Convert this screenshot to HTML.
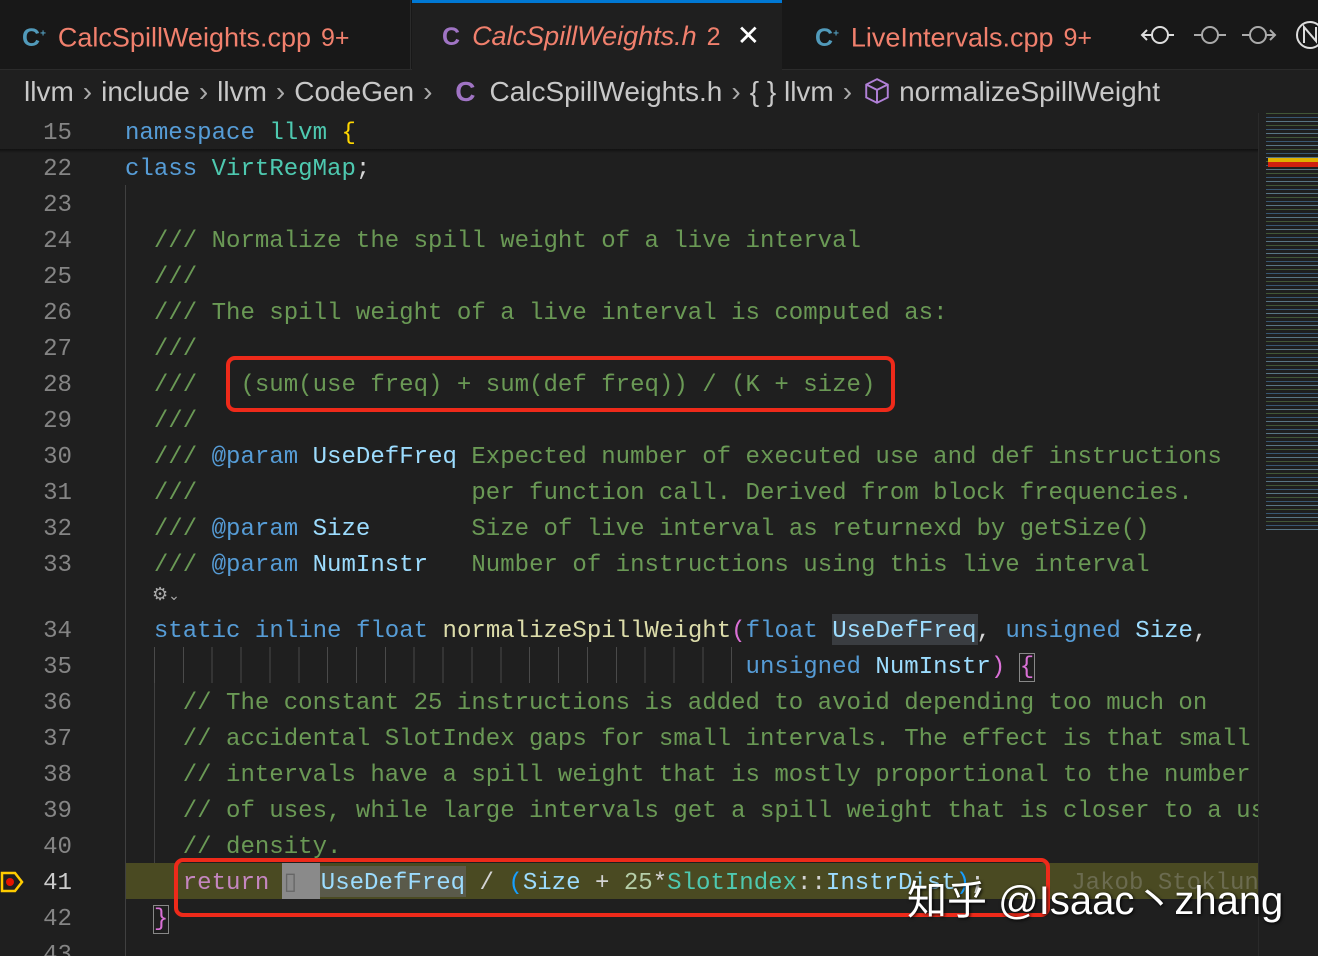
<!DOCTYPE html>
<html><head><meta charset="utf-8"><style>
*{margin:0;padding:0;box-sizing:border-box}
html,body{width:1318px;height:956px;overflow:hidden}
body{background:#1f1f1f;position:relative;font-family:"Liberation Sans",sans-serif}
.tabs{position:absolute;left:0;top:0;width:1318px;height:70px;background:#181818;border-bottom:1px solid #2b2b2b}
.tab{position:absolute;top:0;height:70px;font-size:27px;color:#f1806d;line-height:70px;white-space:nowrap}
.tab .n{color:#f1806d;font-size:25px;margin-left:10px}
.ic{font-weight:bold;font-size:25px;margin-right:12px}
.bc{position:absolute;top:70px;left:0;width:1318px;height:44px;font-size:28px;color:#c8c8c8;line-height:44px;padding-left:24px;white-space:nowrap}
.bc .s{color:#aaa;margin:0 9px}
.code{font-family:"Liberation Mono",monospace;font-size:24.05px;white-space:pre}
.ln{position:absolute;left:0;width:72px;text-align:right;height:36px;line-height:42px;color:#858585}
.l{position:absolute;left:125px;height:36px;line-height:42px;color:#d4d4d4}
.k{color:#569cd6}.t{color:#4ec9b0}.c{color:#6a9955}.f{color:#dcdcaa}.p{color:#9cdcfe}.r{color:#c586c0}.num{color:#b5cea8}.y{color:#ffd700}.pu{color:#da70d6}.b{color:#179fff}
.guide{position:absolute;width:1px;background:#404040}
.box{position:absolute;border:4px solid #ee2a1a;border-radius:9px}
.mm{position:absolute;height:2px}
</style></head><body>
<div class="tabs">
 <div class="tab" style="left:0;width:411px;padding-left:22px;border-right:1px solid #2b2b2b"><span class="ic" style="color:#519aba">C<sup style="font-size:10px">+</sup></span>CalcSpillWeights.cpp<span class="n">9+</span></div>
 <div class="tab" style="left:412px;width:370px;padding-left:30px;background:#1f1f1f;border-top:3px solid #0078d4;line-height:66px"><span class="ic" style="color:#a074c4">C</span><i>CalcSpillWeights.h</i><span class="n">2</span><span style="color:#fff;margin-left:16px;font-size:28px">✕</span></div>
 <div class="tab" style="left:783px;padding-left:32px"><span class="ic" style="color:#519aba">C<sup style="font-size:10px">+</sup></span>LiveIntervals.cpp<span class="n">9+</span></div>
 <svg style="position:absolute;left:1138px;top:18px" width="180" height="34" viewBox="0 0 180 34" fill="none" stroke="#ddd" stroke-width="2">
  <circle cx="22" cy="17" r="8"/><path d="M14 17H4M9 12l-5 5 5 5M30 17h6"/>
  <g stroke="#aaa"><circle cx="72" cy="17" r="8"/><path d="M56 17h8M80 17h8"/>
  <circle cx="120" cy="17" r="8"/><path d="M104 17h8M128 17h8M132 12l5 5-5 5"/></g>
  <circle cx="172" cy="17" r="13"/><path d="M166 25V9l12 14V9"/>
 </svg>
</div>
<div class="bc">llvm<span class="s">›</span>include<span class="s">›</span>llvm<span class="s">›</span>CodeGen<span class="s">›</span> <b style="color:#a074c4;margin:0 14px 0 6px">C</b>CalcSpillWeights.h<span class="s">›</span>{ } llvm<span class="s">›</span><svg width="28" height="28" viewBox="0 0 26 26" style="vertical-align:-4px;margin:0 8px 0 2px" fill="none" stroke="#b180d7" stroke-width="1.8"><path d="M13 2l10 5v12l-10 5-10-5V7z M3 7l10 5 10-5 M13 12v12"/></svg>normalizeSpillWeight</div>

<div style="position:absolute;left:125px;top:863px;width:1133px;height:36px;background:#4a4a22"></div>
<div style="position:absolute;left:282px;top:863px;width:38px;height:36px;background:#8a8a8a"></div>
<div style="position:absolute;left:320px;top:866px;width:146px;height:31px;background:#5a5a4a"></div>
<div style="position:absolute;left:832px;top:614px;width:146px;height:31px;background:#3a3d41"></div>

<div class="guide" style="left:125px;top:185px;height:771px"></div>
<div class="guide" style="left:154px;top:647px;height:36px;width:580px;background:repeating-linear-gradient(90deg,#4a4a4a 0 1px,transparent 1px 28.86px)"></div>
<div class="guide" style="left:154px;top:683px;height:180px"></div>

<div class="code">
<div class="ln" style="top:113px">15</div><div class="l" style="top:113px"><span class="k">namespace</span> <span class="t">llvm</span> <span class="y">{</span></div>
<div style="position:absolute;left:0;top:149px;width:1258px;height:4px;background:linear-gradient(#111,transparent)"></div>
<div class="ln" style="top:149px">22</div><div class="l" style="top:149px"><span class="k">class</span> <span class="t">VirtRegMap</span>;</div>
<div class="ln" style="top:185px">23</div>
<div class="ln" style="top:221px">24</div><div class="l c" style="top:221px">  /// Normalize the spill weight of a live interval</div>
<div class="ln" style="top:257px">25</div><div class="l c" style="top:257px">  ///</div>
<div class="ln" style="top:293px">26</div><div class="l c" style="top:293px">  /// The spill weight of a live interval is computed as:</div>
<div class="ln" style="top:329px">27</div><div class="l c" style="top:329px">  ///</div>
<div class="ln" style="top:365px">28</div><div class="l c" style="top:365px">  ///   (sum(use freq) + sum(def freq)) / (K + size)</div>
<div class="ln" style="top:401px">29</div><div class="l c" style="top:401px">  ///</div>
<div class="ln" style="top:437px">30</div><div class="l c" style="top:437px">  /// <span class="k">@param</span> <span class="p">UseDefFreq</span> Expected number of executed use and def instructions</div>
<div class="ln" style="top:473px">31</div><div class="l c" style="top:473px">  ///                   per function call. Derived from block frequencies.</div>
<div class="ln" style="top:509px">32</div><div class="l c" style="top:509px">  /// <span class="k">@param</span> <span class="p">Size</span>       Size of live interval as returnexd by getSize()</div>
<div class="ln" style="top:545px">33</div><div class="l c" style="top:545px">  /// <span class="k">@param</span> <span class="p">NumInstr</span>   Number of instructions using this live interval</div>
<div style="position:absolute;left:152px;top:584px;color:#aaa;font-size:18px">⚙<span style="font-size:14px">⌄</span></div>
<div class="ln" style="top:611px">34</div><div class="l" style="top:611px">  <span class="k">static</span> <span class="k">inline</span> <span class="k">float</span> <span class="f">normalizeSpillWeight</span><span class="pu">(</span><span class="k">float</span> <span class="p">UseDefFreq</span>, <span class="k">unsigned</span> <span class="p">Size</span>,</div>
<div class="ln" style="top:647px">35</div><div class="l" style="top:647px">                                           <span class="k">unsigned</span> <span class="p">NumInstr</span><span class="pu">)</span> <span class="pu" style="outline:1px solid #888">{</span></div>
<div class="ln" style="top:683px">36</div><div class="l c" style="top:683px">    // The constant 25 instructions is added to avoid depending too much on</div>
<div class="ln" style="top:719px">37</div><div class="l c" style="top:719px">    // accidental SlotIndex gaps for small intervals. The effect is that small</div>
<div class="ln" style="top:755px">38</div><div class="l c" style="top:755px">    // intervals have a spill weight that is mostly proportional to the number</div>
<div class="ln" style="top:791px">39</div><div class="l c" style="top:791px">    // of uses, while large intervals get a spill weight that is closer to a us</div>
<div class="ln" style="top:827px">40</div><div class="l c" style="top:827px">    // density.</div>
<div class="ln" style="top:863px;color:#ccc">41</div><div class="l" style="top:863px">    <span class="r">return</span> <span style="display:inline-block;width:37px;color:#666">▯</span><span class="p">UseDefFreq</span> / <span class="b">(</span><span class="p">Size</span> + <span class="num">25</span>*<span class="t">SlotIndex</span>::<span class="p">InstrDist</span><span class="b">)</span>;      <span style="color:#6b6b50">Jakob Stoklun</span></div>
<div class="ln" style="top:899px">42</div><div class="l" style="top:899px">  <span class="pu" style="outline:1px solid #888">}</span></div>
<div class="ln" style="top:935px">43</div>
</div>
<svg style="position:absolute;left:0;top:870px" width="24" height="24" viewBox="0 0 24 24"><path d="M2 3h13l7 9-7 9H2z" fill="none" stroke="#ffcc00" stroke-width="2.5"/><circle cx="10" cy="12" r="4" fill="#e51400"/></svg>

<div class="box" style="left:226px;top:356px;width:669px;height:56px"></div>
<div class="box" style="left:174px;top:858px;width:876px;height:59px"></div>

<div style="position:absolute;left:1258px;top:113px;width:60px;height:843px;background:#1f1f1f;border-left:1px solid #2a2a2a"></div>
<div style="position:absolute;left:1266px;top:113px;width:52px;height:420px;background:repeating-linear-gradient(#6a9955 0 1px,transparent 1px 4px,#569cd6 4px 5px,transparent 5px 8px,#9cdcfe 8px 9px,transparent 9px 12px);opacity:.45"></div>
<div class="mm" style="left:1268px;top:158px;width:50px;height:4px;background:#e0b000"></div>
<div class="mm" style="left:1268px;top:162px;width:50px;height:5px;background:#d02010"></div>

<div style="position:absolute;left:907px;top:868px;color:#fff;font-size:40px;font-family:'Liberation Sans','Noto Sans CJK SC',sans-serif;text-shadow:1px 1px 3px #000;white-space:nowrap">知乎 @Isaac丶zhang</div>
</body></html>
